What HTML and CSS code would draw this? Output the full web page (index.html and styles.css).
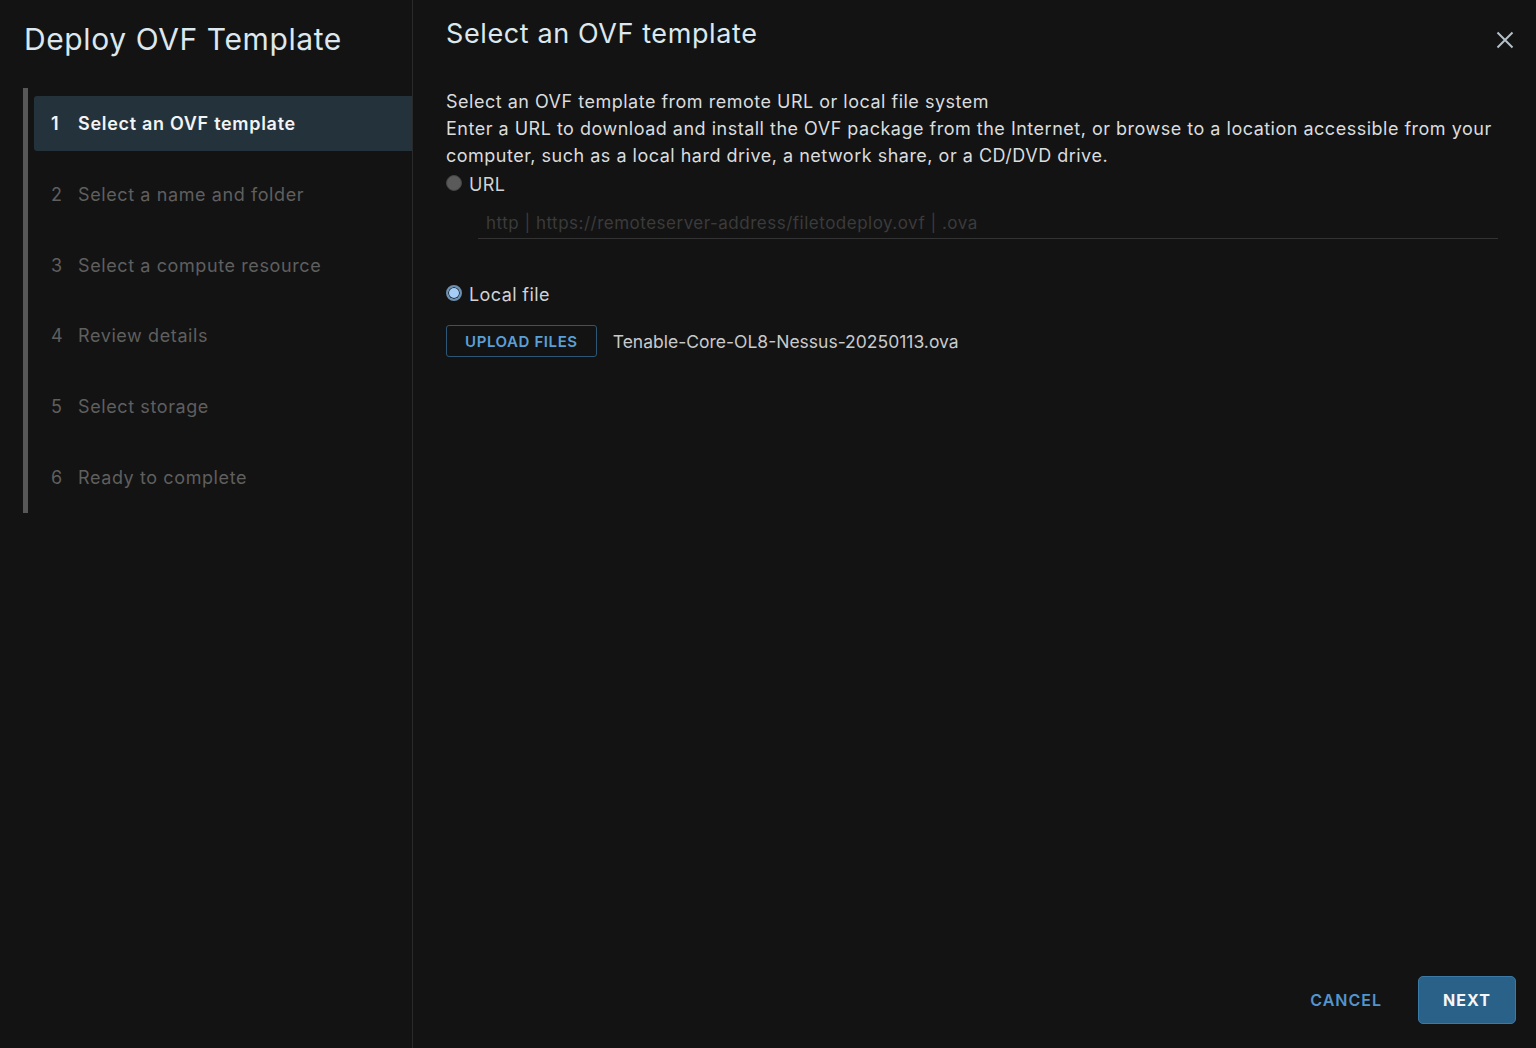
FILE: index.html
```html
<!DOCTYPE html>
<html>
<head>
<meta charset="utf-8">
<link rel="stylesheet" href="styles.css">
</head>
<body>
<div class="wizard">
  <aside class="sidebar">
    <h1 class="wiz-title">Deploy OVF Template</h1>
    <ol class="steps">
      <li class="step active"><span class="num">1</span><span class="label">Select an OVF template</span></li>
      <li class="step"><span class="num">2</span><span class="label">Select a name and folder</span></li>
      <li class="step"><span class="num">3</span><span class="label">Select a compute resource</span></li>
      <li class="step"><span class="num">4</span><span class="label">Review details</span></li>
      <li class="step"><span class="num">5</span><span class="label">Select storage</span></li>
      <li class="step"><span class="num">6</span><span class="label">Ready to complete</span></li>
    </ol>
  </aside>
  <main class="content">
    <header class="content-head">
      <h2 class="page-title">Select an OVF template</h2>
      <button class="close" aria-label="Close">
        <svg width="18" height="18" viewBox="0 0 18 18"><path d="M1.5 1.5 L16.5 16.5 M16.5 1.5 L1.5 16.5" stroke="#b4c0c8" stroke-width="2" fill="none"/></svg>
      </button>
    </header>
    <div class="body">
      <p class="desc">Select an OVF template from remote URL or local file system<br>Enter a URL to download and install the OVF package from the Internet, or browse to a location accessible from your computer, such as a local hard drive, a network share, or a CD/DVD drive.</p>
      <label class="radio url"><span class="dot"></span>URL</label>
      <div class="url-field"><span class="placeholder">http | https://remoteserver-address/filetodeploy.ovf | .ova</span></div>
      <label class="radio local"><span class="dot checked"></span>Local file</label>
      <div class="upload-row">
        <button class="btn-outline">UPLOAD FILES</button>
        <span class="filename">Tenable-Core-OL8-Nessus-20250113.ova</span>
      </div>
    </div>
    <footer class="actions">
      <button class="btn-link">CANCEL</button>
      <button class="btn-primary">NEXT</button>
    </footer>
  </main>
</div>
</body>
</html>
```
FILE: styles.css
```css
* { box-sizing: border-box; }
html, body { margin: 0; padding: 0; height: 100%; }
body {
  background: #131313;
  font-family: "Inter", "Noto Sans", sans-serif;
  color: #d9dde0;
}
.wizard { display: flex; height: 100vh; }
.sidebar {
  width: 413px;
  flex: 0 0 413px;
  border-right: 1px solid #2a2a2a;
  padding-top: 20px;
}
.wiz-title {
  margin: 0 0 0 24px;
  font-size: 30px;
  font-weight: 400;
  color: #dce7ee;
  line-height: 38px;
  letter-spacing: 0.6px;
}
.steps {
  list-style: none;
  margin: 30px 0 0 23px;
  padding: 8px 0 8px 0;
  border-left: 5px solid #575757;
  display: flex;
  flex-direction: column;
  gap: 15.8px;
}
.step {
  margin-left: 6px;
  height: 55px;
  display: flex;
  align-items: center;
  padding-left: 17px;
  font-size: 18px;
  letter-spacing: 0.6px;
  color: #5f5f5f;
  border-radius: 3px 0 0 3px;
}
.step .num { width: 27px; letter-spacing: 0; }
.step.active {
  background: #24323b;
  color: #f2f4f5;
  font-weight: 600;
  letter-spacing: 0.7px;
}
.content {
  flex: 1;
  display: flex;
  flex-direction: column;
  padding: 0 20px 24px 33px;
}
.content-head {
  display: flex;
  justify-content: space-between;
  align-items: flex-start;
  padding-top: 15px;
}
.page-title {
  margin: 0;
  font-size: 27px;
  font-weight: 400;
  color: #dce7ee;
  line-height: 38px;
  letter-spacing: 0.6px;
}
.close {
  background: none;
  border: 0;
  padding: 0;
  margin-top: 16px;
  margin-right: 2px;
  cursor: pointer;
}
.body { flex: 1; padding-right: 18px; }
.desc {
  margin: 35px 0 0 0;
  font-size: 18px;
  letter-spacing: 0.5px;
  line-height: 27px;
  color: #dadcde;
}
.radio {
  display: flex;
  align-items: center;
  font-size: 18px;
  letter-spacing: 0.4px;
  line-height: 27px;
  color: #d0d2d4;
}
.radio.url { margin-top: 2px; }
.dot {
  width: 16px;
  height: 16px;
  border-radius: 50%;
  background: #5a5a5a;
  border: 1px solid #444;
  margin-right: 7px;
  margin-top: -4px;
}
.dot.checked {
  background: #a6cdf5;
  border: 2px solid #6f8fae;
  box-shadow: inset 0 0 0 1px #1b2a36;
}
.url-field {
  margin: 11px 0 0 32px;
  border-bottom: 1px solid #333;
  height: 30px;
  display: flex;
  align-items: center;
  padding-left: 8px;
  padding-bottom: 1px;
}
.placeholder { font-size: 17px; letter-spacing: 0.5px; color: #3b3b3b; }
.radio.local { margin-top: 42px; }
.upload-row {
  display: flex;
  align-items: center;
  margin-top: 17px;
  gap: 16px;
}
.btn-outline {
  height: 32px;
  padding: 0 18px;
  background: transparent;
  border: 1px solid #2d5775;
  border-radius: 3px;
  color: #5aa0d8;
  font-family: inherit;
  font-size: 15px;
  font-weight: 600;
  letter-spacing: 0.6px;
}
.filename { font-size: 17.5px; color: #c8cacc; }
.actions {
  display: flex;
  justify-content: flex-end;
  align-items: center;
  gap: 36px;
}
.btn-link {
  background: none;
  border: 0;
  padding: 0;
  color: #5394cc;
  font-family: inherit;
  font-size: 16px;
  font-weight: 600;
  letter-spacing: 1px;
}
.btn-primary {
  width: 98px;
  height: 48px;
  background: #2a6189;
  border: 1px solid #3b7aa6;
  border-radius: 5px;
  color: #f4f6f8;
  font-family: inherit;
  font-size: 16px;
  font-weight: 700;
  letter-spacing: 1px;
}
```
